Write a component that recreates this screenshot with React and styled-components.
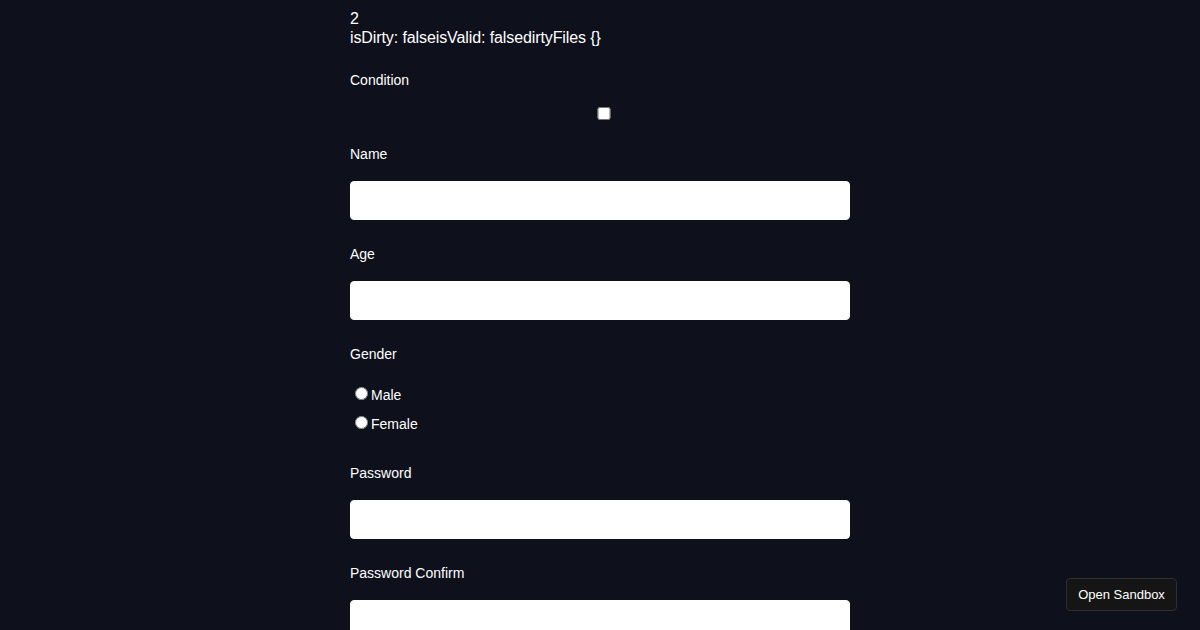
import React from "react";
import styled, { createGlobalStyle } from "styled-components";

const Global = createGlobalStyle`
  html, body {
    margin: 0;
    padding: 0;
    background: #0e101c;
    color: #ffffff;
    font-family: "Liberation Sans", Arial, Helvetica, sans-serif;
  }
`;

const Page = styled.div`
  min-height: 630px;
  padding-top: 9px;
  box-sizing: border-box;
`;

const Form = styled.form`
  width: 500px;
  margin: 0 auto;
  display: flow-root;
`;

const StatusLine = styled.div`
  font-size: 16px;
  line-height: 19px;
  color: #ffffff;
  letter-spacing: -0.1px;
`;

const Label = styled.label`
  display: block;
  line-height: 2;
  font-size: 14px;
  font-weight: 200;
  color: #ffffff;
  margin-top: ${(p) => (p.$first ? "19px" : "20px")};
  margin-bottom: 13px;
`;

const TextInput = styled.input`
  display: block;
  box-sizing: border-box;
  width: 100%;
  height: 39px;
  border-radius: 4px;
  border: 1px solid #ffffff;
  background: #ffffff;
  padding: 10px 15px;
  margin: 0 0 10px 0;
  font-size: 14px;
  font-family: inherit;
`;

const CheckInput = styled.input`
  display: block;
  box-sizing: border-box;
  width: 100%;
  height: 13px;
  margin: 0 0 3px 4px;
`;

const RadioRow = styled.div`
  font-size: 14px;
  line-height: 29px;
  color: #ffffff;
`;

const Radio = styled.input`
  margin: 3px 3px 0 5px;
  width: 13px;
  height: 13px;
`;

const SandboxButton = styled.button`
  position: fixed;
  right: 23px;
  bottom: 19px;
  width: 111px;
  height: 33px;
  box-sizing: border-box;
  background: #151515;
  color: #ffffff;
  border: 1px solid #2e2e2e;
  border-radius: 4px;
  font-family: "Liberation Sans", Arial, sans-serif;
  font-size: 13px;
  padding: 0;
`;

export default function App() {
  return (
    <Page>
      <Global />
      <Form onSubmit={(e) => e.preventDefault()}>
        <StatusLine>2</StatusLine>
        <StatusLine>isDirty: falseisValid: falsedirtyFiles {"{}"}</StatusLine>

        <Label $first>Condition</Label>
        <CheckInput type="checkbox" />

        <Label>Name</Label>
        <TextInput type="text" />

        <Label>Age</Label>
        <TextInput type="number" />

        <Label>Gender</Label>
        <RadioRow>
          <Radio type="radio" name="gender" value="male" />
          Male
        </RadioRow>
        <RadioRow>
          <Radio type="radio" name="gender" value="female" />
          Female
        </RadioRow>

        <Label>Password</Label>
        <TextInput type="password" />

        <Label>Password Confirm</Label>
        <TextInput type="password" />
      </Form>
      <SandboxButton type="button">Open Sandbox</SandboxButton>
    </Page>
  );
}
